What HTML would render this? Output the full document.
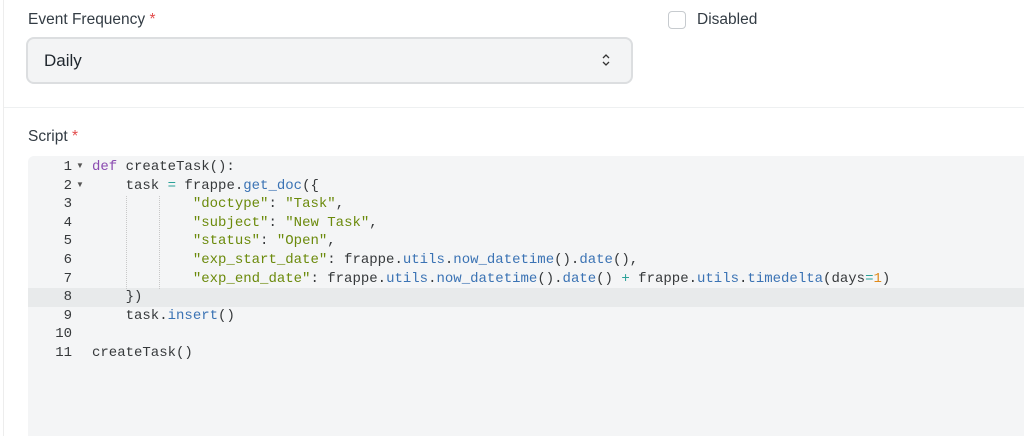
<!DOCTYPE html>
<html><head><style>
body{margin:0;width:1024px;height:436px;background:#fff;font-family:"Liberation Sans",sans-serif;position:relative;overflow:hidden}
.vl{position:absolute;left:3px;top:0;width:1px;height:436px;background:#ededed}
.lbl{position:absolute;font-size:15.5px;color:#333c44}
.req{color:#e24c4c}
.sel{position:absolute;left:26px;top:37px;width:603px;height:43px;background:#f3f4f5;border:2px solid #dcdee0;border-radius:8px;box-sizing:content-box}
.sel span{position:absolute;left:16px;top:12px;font-size:17px;color:#1f272e}
.cb{position:absolute;left:668px;top:11px;width:16px;height:16px;border:1px solid #c7cbcf;border-radius:4px}
.hr{position:absolute;left:4px;right:0;top:107px;height:1px;background:#eef0f1}
.ed{position:absolute;left:28px;top:156px;width:996px;height:280px;background:#f4f5f6;border-radius:6px 0 0 0}
.hl{position:absolute;left:28px;top:288px;width:996px;height:19px;background:#e8eaeb}
pre{position:absolute;margin:0;top:158px;font-family:"Liberation Mono",monospace;font-size:14px;line-height:18.6px;color:#36393b}
.ln{left:40px;width:32px;text-align:right;color:#36393b}
.code{left:92px}
.k{color:#8a4ab0}.f{color:#3b73b4}.s{color:#6b8a0b}.n{color:#e08a1b}.o{color:#2aa198}
.ar{position:absolute;font-size:8px;color:#555}
.guide{position:absolute;top:196px;width:0;height:93px;border-left:1px dotted #c8c8c8}
</style></head><body>
<div class="vl"></div>
<div class="lbl" style="left:28px;top:11px">Event Frequency <span class="req">*</span></div>
<div class="sel"><span>Daily</span>
<svg style="position:absolute;right:20px;top:13px" width="10" height="16" viewBox="0 0 10 16"><path d="M2 6l3-3 3 3M2 10l3 3 3-3" fill="none" stroke="#333" stroke-width="1.3"/></svg></div>
<div class="cb"></div>
<div class="lbl" style="left:697px;top:11px">Disabled</div>
<div class="hr"></div>
<div class="lbl" style="left:28px;top:128px">Script <span class="req">*</span></div>
<div class="ed"></div>
<div class="hl"></div>
<div class="guide" style="left:126px"></div>
<div class="guide" style="left:159px"></div>
<pre class="ln">1
2
3
4
5
6
7
8
9
10
11</pre>
<div class="ar" style="left:76px;top:161px">▼</div>
<div class="ar" style="left:76px;top:180px">▼</div>
<pre class="code"><span class="k">def</span> createTask():
    task <span class="o">=</span> frappe.<span class="f">get_doc</span>({
            <span class="s">"doctype"</span>: <span class="s">"Task"</span>,
            <span class="s">"subject"</span>: <span class="s">"New Task"</span>,
            <span class="s">"status"</span>: <span class="s">"Open"</span>,
            <span class="s">"exp_start_date"</span>: frappe.<span class="f">utils</span>.<span class="f">now_datetime</span>().<span class="f">date</span>(),
            <span class="s">"exp_end_date"</span>: frappe.<span class="f">utils</span>.<span class="f">now_datetime</span>().<span class="f">date</span>() <span class="o">+</span> frappe.<span class="f">utils</span>.<span class="f">timedelta</span>(days<span class="o">=</span><span class="n">1</span>)
    })
    task.<span class="f">insert</span>()

createTask()</pre>
</body></html>
